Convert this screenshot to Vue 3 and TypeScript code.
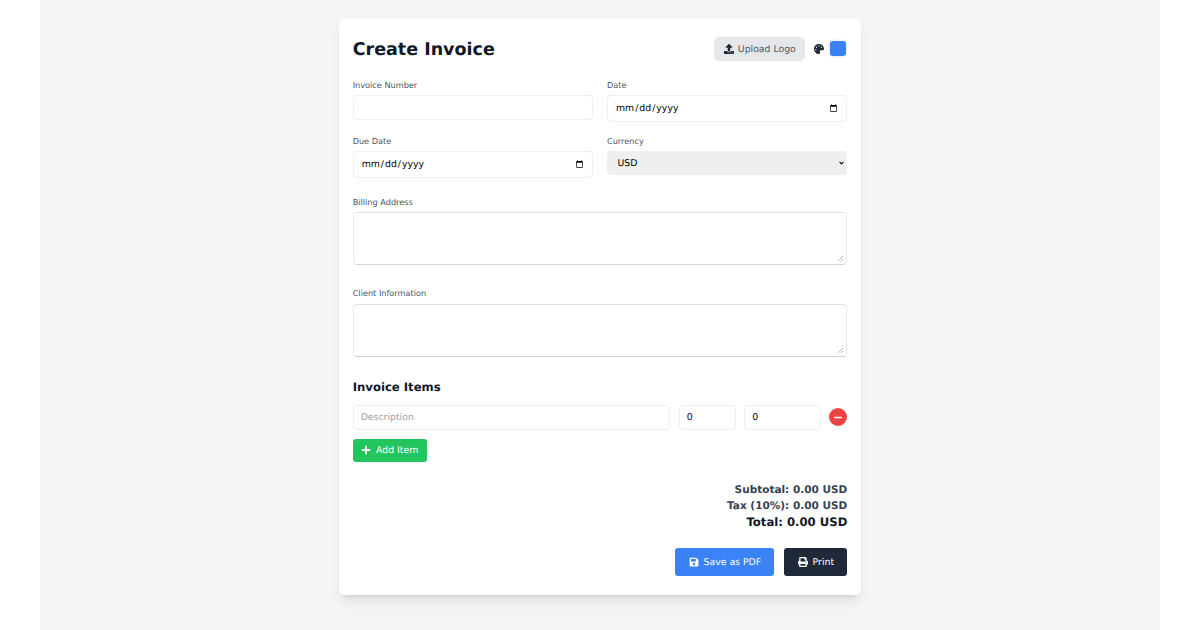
<script setup lang="ts">
import { ref } from 'vue'

interface Item { description: string; qty: number; price: number }
const items = ref<Item[]>([{ description: '', qty: 0, price: 0 }])
</script>

<template>
  <div class="page">
    <main class="card">
      <header class="head">
        <h1>Create Invoice</h1>
        <div class="tools">
          <button class="upload">
            <svg viewBox="0 0 512 512" class="ico"><path d="M296 384h-80c-13.3 0-24-10.7-24-24V192h-87.7c-17.8 0-26.7-21.5-14.1-34.1L242.3 5.7c7.5-7.5 19.8-7.5 27.3 0l152.2 152.2c12.6 12.6 3.7 34.1-14.1 34.1H320v168c0 13.3-10.7 24-24 24zm216-8v112c0 13.3-10.7 24-24 24H24c-13.3 0-24-10.7-24-24V376c0-13.3 10.7-24 24-24h136v8c0 30.9 25.1 56 56 56h80c30.9 0 56-25.1 56-56v-8h136c13.3 0 24 10.7 24 24zm-124 88c0-11-9-20-20-20s-20 9-20 20 9 20 20 20 20-9 20-20zm64 0c0-11-9-20-20-20s-20 9-20 20 9 20 20 20 20-9 20-20z"/></svg>
            Upload Logo
          </button>
          <svg viewBox="0 0 512 512" class="ico palette"><path d="M204.3 5C104.9 24.4 24.8 104.3 5.2 203.4c-37 187 131.7 326.4 258.8 306.7 41.2-6.4 61.4-54.6 42.5-91.7-23.1-45.4 9.9-98.4 60.9-98.4h79.7c35.8 0 64.8-29.6 64.9-65.3C511.5 97.1 368.1-26.9 204.3 5zM96 320c-17.7 0-32-14.3-32-32s14.3-32 32-32 32 14.3 32 32-14.3 32-32 32zm32-128c-17.7 0-32-14.3-32-32s14.3-32 32-32 32 14.3 32 32-14.3 32-32 32zm128-64c-17.7 0-32-14.3-32-32s14.3-32 32-32 32 14.3 32 32-14.3 32-32 32zm128 64c-17.7 0-32-14.3-32-32s14.3-32 32-32 32 14.3 32 32-14.3 32-32 32z"/></svg>
          <span class="swatch"></span>
        </div>
      </header>

      <section class="grid">
        <div class="field">
          <label>Invoice Number</label>
          <input type="text" class="ctl" />
        </div>
        <div class="field">
          <label>Date</label>
          <input type="date" class="ctl" />
        </div>
        <div class="field">
          <label>Due Date</label>
          <input type="date" class="ctl" />
        </div>
        <div class="field">
          <label>Currency</label>
          <select class="ctl sel"><option>USD</option></select>
        </div>
      </section>

      <div class="field block first">
        <label>Billing Address</label>
        <textarea class="ctl area"></textarea>
      </div>
      <div class="field block second">
        <label class="client">Client Information</label>
        <textarea class="ctl area"></textarea>
      </div>

      <h2>Invoice Items</h2>
      <div v-for="(item, i) in items" :key="i" class="row">
        <input v-model="item.description" class="ctl desc" placeholder="Description" />
        <input v-model="item.qty" type="number" class="ctl qty" />
        <input v-model="item.price" type="number" class="ctl price" />
        <button class="remove" aria-label="Remove">
          <svg viewBox="0 0 448 512" class="ico"><path d="M416 208H32c-17.67 0-32 14.33-32 32v32c0 17.67 14.33 32 32 32h384c17.67 0 32-14.33 32-32v-32c0-17.67-14.33-32-32-32z"/></svg>
        </button>
      </div>
      <button class="add">
        <svg viewBox="0 0 448 512" class="ico"><path d="M416 208H272V64c0-17.67-14.33-32-32-32h-32c-17.67 0-32 14.33-32 32v144H32c-17.67 0-32 14.33-32 32v32c0 17.67 14.33 32 32 32h144v144c0 17.67 14.33 32 32 32h32c17.67 0 32-14.33 32-32V304h144c17.67 0 32-14.33 32-32v-32c0-17.67-14.33-32-32-32z"/></svg>
        Add Item
      </button>

      <div class="totals">
        <p>Subtotal: 0.00 USD</p>
        <p>Tax (10%): 0.00 USD</p>
        <p class="total">Total: 0.00 USD</p>
      </div>

      <div class="actions">
        <button class="act save">
          <svg viewBox="0 0 448 512" class="ico"><path d="M433.941 129.941l-83.882-83.882A48 48 0 0 0 316.118 32H48C21.49 32 0 53.49 0 80v352c0 26.51 21.49 48 48 48h352c26.51 0 48-21.49 48-48V163.882a48 48 0 0 0-14.059-33.941zM224 416c-35.346 0-64-28.654-64-64 0-35.346 28.654-64 64-64s64 28.654 64 64c0 35.346-28.654 64-64 64zm96-304.52V212c0 6.627-5.373 12-12 12H76c-6.627 0-12-5.373-12-12V108c0-6.627 5.373-12 12-12h228.52c3.183 0 6.235 1.264 8.485 3.515l3.48 3.48A11.996 11.996 0 0 1 320 111.48z"/></svg>
          Save as PDF
        </button>
        <button class="act print">
          <svg viewBox="0 0 512 512" class="ico"><path d="M448 192V77.25c0-8.49-3.37-16.62-9.37-22.63L393.37 9.37c-6-6-14.14-9.37-22.63-9.37H96C78.33 0 64 14.33 64 32v160c-35.35 0-64 28.65-64 64v112c0 8.84 7.16 16 16 16h48v96c0 17.67 14.33 32 32 32h320c17.67 0 32-14.33 32-32v-96h48c8.84 0 16-7.16 16-16V256c0-35.35-28.65-64-64-64zm-64 256H128v-96h256v96zm0-224H128V64h192v48c0 8.84 7.16 16 16 16h48v96zm48 72c-13.25 0-24-10.75-24-24 0-13.26 10.75-24 24-24s24 10.74 24 24c0 13.25-10.75 24-24 24z"/></svg>
          Print
        </button>
      </div>
    </main>
  </div>
</template>

<style>
html, body { margin: 0; background: #fff; }
</style>

<style scoped>
* { box-sizing: border-box; }
.page {
  width: 1120px;
  height: 630px;
  margin: 0 auto;
  padding-top: 19px;
  background: #f3f4f6;
  font-family: "DejaVu Sans", sans-serif;
  text-rendering: geometricPrecision;
  overflow: hidden;
}
.card {
  width: 522.67px;
  height: 576px;
  margin: 0 auto;
  padding: 14px;
  background: #fff;
  border-radius: 5px;
  box-shadow: 0 8px 12px -3px rgba(0,0,0,.1), 0 3px 5px -3px rgba(0,0,0,.1);
}
.head {
  display: flex;
  justify-content: space-between;
  align-items: center;
  height: 31px;
  margin-bottom: 15px;
}
h1 {
  margin: 0;
  padding-top: 2px;
  font-size: 17.5px;
  font-weight: 700;
  color: #111827;
}
.tools { display: flex; align-items: center; }
button {
  font-family: inherit;
  text-rendering: geometricPrecision;
  border: 0;
  display: flex;
  align-items: center;
  justify-content: center;
  padding: 0;
}
.ico { width: 10px; height: 10px; fill: currentColor; flex: none; }
.upload {
  width: 91px;
  height: 24px;
  padding: 1px 0 0 1px;
  gap: 4px;
  border-radius: 5px;
  background: #e5e7eb;
  color: #4b5563;
  font-size: 9.33px;
}
.upload .ico { color: #1f2937; }
.palette { margin-left: 9.5px; color: #1f2937; }
.swatch {
  width: 16px;
  height: 15px;
  margin-left: 6px;
  margin-right: 1px;
  border-radius: 3px;
  background: #3b82f6;
  box-shadow: 0 0 0 1.5px #f2f2f2;
}
.grid {
  display: grid;
  grid-template-columns: 1fr 1fr;
  column-gap: 14px;
  row-gap: 13.33px;
  align-items: start;
}
.field { display: flex; flex-direction: column; }
label {
  font-size: 8.17px;
  line-height: 12px;
  margin-bottom: 4px;
  color: #4b5563;
}
label.client { margin-bottom: 5px; }
.ctl {
  font-family: inherit;
  text-rendering: geometricPrecision;
  font-size: 9.33px;
  color: #000;
  background: #fff;
  border: 1px solid #eeeff1;
  border-radius: 4px;
  padding: 0 7px;
  outline: none;
  width: 100%;
  height: 25px;
}
input[type="date"].ctl { height: 26.67px; padding: 0 6px 0 7px; }
.sel {
  height: 24px;
  background: #efefef url("data:image/svg+xml,%3Csvg xmlns='http://www.w3.org/2000/svg' viewBox='0 0 6 4'%3E%3Cpath d='M.7.7 3 3 5.3.7' fill='none' stroke='%23111' stroke-width='1.5'/%3E%3C/svg%3E") no-repeat right 2px center / 5px 4px;
  appearance: none;
  padding: 2px 0 0 9.5px;
}
.area {
  display: block;
  height: 53px;
  resize: vertical;
  border-color: #dfe1e5 #e9eaed #d0d3d9;
}
.area::-webkit-resizer {
  background: url("data:image/svg+xml,%3Csvg xmlns='http://www.w3.org/2000/svg' viewBox='0 0 10 10'%3E%3Cpath d='M9 4 4 9M9 7 7 9' fill='none' stroke='%23999' stroke-width='1' stroke-dasharray='1 .6'/%3E%3C/svg%3E") no-repeat center / 10px 10px;
}
.first { margin-top: 18px; }
.second { margin-top: 22px; }
h2 {
  margin: 23px 0 0;
  font-size: 11.67px;
  line-height: 15px;
  font-weight: 700;
  color: #111827;
}
.row {
  display: flex;
  align-items: center;
  gap: 8.67px;
  margin-top: 10px;
}
.desc { width: 317.5px; }
.qty { width: 56.83px; }
.price { width: 76.33px; }
.desc::placeholder { color: #9ca3af; }
.remove {
  width: 18px;
  height: 18px;
  border-radius: 50%;
  background: #ef4444;
  color: #fff;
  flex: none;
}
.remove .ico { width: 8px; height: 9px; }
.add {
  width: 74px;
  height: 23px;
  margin-top: 9px;
  gap: 5px;
  border-radius: 3px;
  background: #22c55e;
  color: #fff;
  font-size: 9.33px;
}
.totals {
  margin-top: 20px;
  text-align: right;
  color: #374151;
  font-size: 10.5px;
  font-weight: 700;
  line-height: 16px;
}
.totals p { margin: 0; }
.total { color: #111827; font-size: 11.67px; }
.actions {
  display: flex;
  justify-content: flex-end;
  gap: 10px;
  margin-top: 18px;
}
.act {
  height: 28px;
  padding-top: 1px;
  gap: 5px;
  border-radius: 3px;
  color: #fff;
  font-size: 9.33px;
}
.save { width: 99px; background: #3b82f6; }
.print { width: 63px; background: #1f2937; }
</style>
